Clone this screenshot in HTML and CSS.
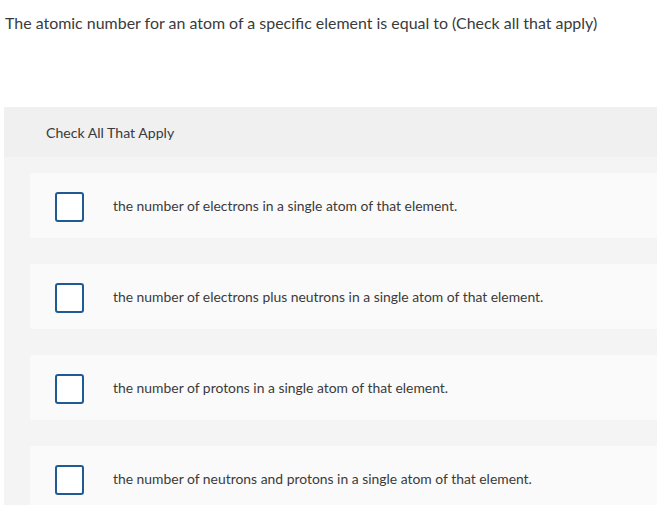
FILE: index.html
```html
<!DOCTYPE html>
<html>
<head>
<meta charset="utf-8">
<link rel="stylesheet" href="styles.css">
</head>
<body>
<p class="question">The atomic number for an atom of a specific element is equal to (Check all that apply)</p>
<div class="panel">
  <div class="panel-head">Check All That Apply</div>
  <div class="panel-body">
    <label class="option"><span class="box"></span><span class="opt-text">the number of electrons in a single atom of that element.</span></label>
    <label class="option"><span class="box"></span><span class="opt-text">the number of electrons plus neutrons in a single atom of that element.</span></label>
    <label class="option"><span class="box"></span><span class="opt-text">the number of protons in a single atom of that element.</span></label>
    <label class="option"><span class="box"></span><span class="opt-text">the number of neutrons and protons in a single atom of that element.</span></label>
  </div>
</div>
</body>
</html>
```
FILE: styles.css
```css
html, body {
  margin: 0;
  padding: 0;
  background: #ffffff;
  overflow: hidden;
}
body {
  font-family: Lato, "Open Sans", sans-serif;
  color: #3a3a3a;
}
.question {
  margin: 0;
  padding: 13px 5px 0 5px;
  height: 107px;
  box-sizing: border-box;
  font-size: 15.95px;
  line-height: 20px;
  color: #3a3a3a;
}
.panel {
  margin-left: 4px;
  background: #f4f4f4;
}
.panel-head {
  height: 50px;
  display: flex;
  align-items: center;
  padding-left: 42px;
  background: #f0f0f0;
  font-size: 14.1px;
}
.panel-body {
  display: flex;
  flex-direction: column;
  gap: 26px;
  padding: 16px 0 0 26px;
}
.option {
  height: 65px;
  display: flex;
  align-items: center;
  gap: 29px;
  padding-left: 25px;
  background: #fafafa;
  border-radius: 2px 0 0 2px;
}
.box {
  width: 25px;
  height: 26px;
  border: 2px solid #1f5a94;
  border-radius: 3px;
  background: #ffffff;
  flex: none;
  margin-top: 3px;
}
.opt-text {
  font-size: 13.9px;
  color: #3a3a3a;
}
```
